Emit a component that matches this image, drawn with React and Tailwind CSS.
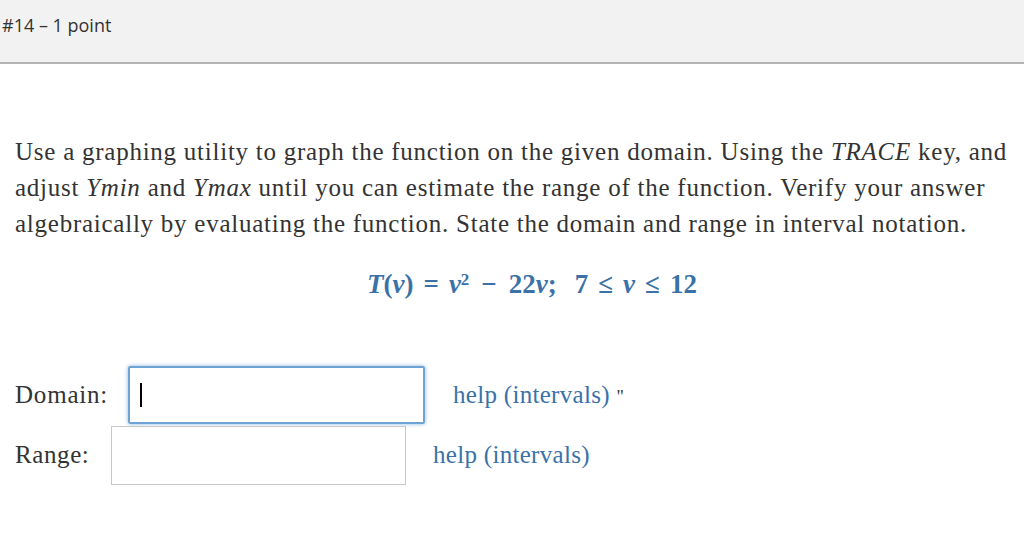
import React from "react";

export default function App() {
  const serif = { fontFamily: '"Liberation Serif", "DejaVu Serif", serif' };
  return (
    <div className="w-[1024px] h-[546px] bg-white overflow-hidden">
      <div className="h-[64px] bg-[#f2f2f2] border-b-2 border-[#b4b4b4] flex items-center pl-[2px]">
        <span className="text-[18px] text-[#333] pb-[12px]" style={{ fontFamily: '"Open Sans", sans-serif' }}>#14 – 1 point</span>
      </div>
      <div className="pl-[15px] pr-[4px] pt-[70px] text-[#333]" style={serif}>
        <p className="text-[25px] leading-[36px] tracking-[0.75px] whitespace-nowrap">
          Use a graphing utility to graph the function on the given domain. Using the <i>TRACE</i> key, and
          <br />
          adjust <i>Ymin</i> and <i>Ymax</i> until you can estimate the range of the function. Verify your answer
          <br />
          algebraically by evaluating the function. State the domain and range in interval notation.
        </p>
        <div className="flex mt-[22px] pl-[352px] text-[#3a72a8] text-[27px] font-bold whitespace-nowrap">
          <span>
            <i>T</i>(<i>v</i>)<span className="inline-block w-[10px]"></span>=<span className="inline-block w-[10px]"></span><i>v</i><sup className="text-[17px]">2</sup><span className="inline-block w-[12px]"></span>−<span className="inline-block w-[12px]"></span>22<i>v</i>;
            <span className="inline-block w-[18px]"></span>
            7<span className="inline-block w-[10px]"></span>≤<span className="inline-block w-[10px]"></span><i>v</i><span className="inline-block w-[10px]"></span>≤<span className="inline-block w-[10px]"></span>12
          </span>
        </div>
        <div className="mt-[61px] flex items-center">
          <span className="text-[25px] tracking-[0.8px] w-[113px]">Domain:</span>
          <div className="w-[297px] h-[58px] border-2 border-[#6ea3d4] rounded-[2px] shadow-[0_0_4px_#8bb6df] flex items-center pl-[10px]">
            <div className="w-[1.5px] h-[24px] bg-black"></div>
          </div>
          <span className="ml-[28px] text-[25px] tracking-[0.3px] text-[#3a72a8]">help (intervals) <span className="text-[#333] text-[18px]">"</span></span>
        </div>
        <div className="mt-[2px] flex items-center">
          <span className="text-[25px] tracking-[0.6px] w-[96px]">Range:</span>
          <div className="w-[295px] h-[59px] border border-[#c8c8c8]"></div>
          <span className="ml-[27px] text-[25px] tracking-[0.3px] text-[#3a72a8]">help (intervals)</span>
        </div>
      </div>
    </div>
  );
}
